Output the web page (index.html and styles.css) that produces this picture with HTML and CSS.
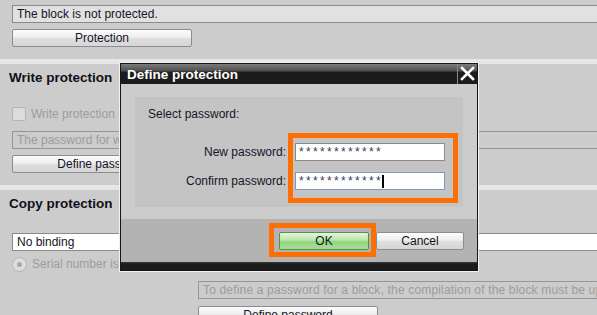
FILE: index.html
```html
<!DOCTYPE html>
<html>
<head>
<meta charset="utf-8">
<link rel="stylesheet" href="styles.css">
</head>
<body>
<div class="page">
  <div class="sec top">
    <div class="field info">The block is not protected.</div>
    <div class="btn wide gap6">Protection</div>
  </div>
  <div class="band b1"></div>
  <div class="sec">
    <h2 class="head">Write protection</h2>
    <div class="opt check-row dis"><span class="check"></span><span>Write protection</span></div>
    <div class="field dis f2">The password for write protection</div>
    <div class="btn wide gap6">Define password</div>
  </div>
  <div class="band b2"></div>
  <div class="sec">
    <h2 class="head">Copy protection</h2>
    <div class="field white f3">No binding</div>
    <div class="opt radio-row dis"><span class="radio"><span class="dot"></span></span><span>Serial number is known</span></div>
    <div class="indent">
      <div class="field dis f4 wide-text">To define a password for a block, the compilation of the block must be up to date.</div>
      <div class="btn wide gap7">Define password</div>
    </div>
  </div>

  <div class="dialog">
    <div class="titlebar">
      <span class="title">Define protection</span>
      <span class="close">
        <svg width="19" height="20" viewBox="0 0 19 20"><path d="M4 4 L15 15 M15 4 L4 15" stroke="#fff" stroke-width="2.6" stroke-linecap="square" fill="none"/></svg>
      </span>
    </div>
    <div class="dbody">
      <div class="panel">
        <div class="select">Select password:</div>
        <div class="pwrow">
          <div class="labels">
            <div class="lbl">New password:</div>
            <div class="lbl">Confirm password:</div>
          </div>
          <div class="hl pwbox">
            <div class="pw">************</div>
            <div class="pw focus">************<span class="caret"></span></div>
          </div>
        </div>
      </div>
    </div>
    <div class="dfoot">
      <div class="hl okbox"><div class="btn ok">OK</div></div>
      <div class="btn cancel">Cancel</div>
    </div>
    <div class="dbottom"></div>
  </div>
</div>
</body>
</html>
```

FILE: styles.css
```css
html, body {
  margin: 0;
  padding: 0;
}
body {
  width: 597px;
  height: 315px;
  overflow: hidden;
  background: #cccccc;
  font-family: "Liberation Sans", Arial, sans-serif;
  font-size: 12px;
  color: #141428;
}
.page {
  position: relative;
  width: 597px;
  height: 315px;
  overflow: hidden;
}
.top {
  padding-top: 5px;
}
.field {
  box-sizing: border-box;
  height: 18px;
  line-height: 16px;
  border: 1px solid #8a8a8a;
  margin: 0 -6px 0 12px;
  padding-left: 4px;
  white-space: nowrap;
  overflow: hidden;
}
.info {
  background: #e1e1e1;
}
.white {
  background: #ffffff;
}
.field.dis {
  background: #cccccc;
  color: #9c9c9c;
  border-color: #959595;
}
.wide-text {
  letter-spacing: 0.17px;
}
.btn {
  box-sizing: border-box;
  height: 18px;
  line-height: 16px;
  text-align: center;
  border: 1px solid #8c8c8c;
  border-radius: 2px;
  background: linear-gradient(#fcfcfc, #eeeeee 45%, #dedede 55%, #d6d6d6);
  color: #141428;
}
.wide {
  width: 180px;
  margin-left: 12px;
}
.gap6 { margin-top: 6px; }
.gap7 { margin-top: 7px; }
.band {
  height: 5px;
  background: #e6e6e6;
}
.b1 { margin-top: 12px; }
.b2 { margin-top: 12px; }
.head {
  margin: 6px 0 0 9px;
  font-size: 13.5px;
  line-height: 16px;
  font-weight: bold;
  color: #101018;
}
.opt {
  display: flex;
  align-items: center;
  height: 16px;
  margin-left: 12px;
  white-space: nowrap;
}
.opt.dis {
  color: #9c9c9c;
}
.check-row {
  margin-top: 20px;
}
.check {
  box-sizing: border-box;
  width: 14px;
  height: 14px;
  border: 1px solid #b4b4b4;
  border-radius: 2px;
  background: #dcdcdc;
  margin-right: 5px;
}
.f2 { margin-top: 9px; }
.f3 { margin-top: 21px; }
.radio-row {
  margin-top: 5px;
}
.radio {
  box-sizing: border-box;
  width: 15px;
  height: 15px;
  border: 1px solid #b4b4b4;
  border-radius: 50%;
  background: #dedede;
  margin-right: 5px;
  display: flex;
  align-items: center;
  justify-content: center;
}
.dot {
  width: 5px;
  height: 5px;
  border-radius: 50%;
  background: #a8a8a8;
}
.indent .field {
  margin-left: 198px;
}
.indent .wide {
  margin-left: 198px;
}
.f4 { margin-top: 9px; }

/* dialog overlay */
.dialog {
  position: absolute;
  left: 120px;
  top: 63px;
  width: 358px;
  height: 208px;
  box-sizing: border-box;
  border: 1px solid #161616;
  box-shadow: 0 0 0 1px #f2f2f2;
  display: flex;
  flex-direction: column;
  background: #cccccc;
}
.titlebar {
  height: 20px;
  display: flex;
  align-items: center;
  justify-content: space-between;
  background: linear-gradient(#7c7c7c 0, #4e4e4e 7px, #1c1c1c 8px, #1c1c1c);
}
.title {
  color: #ffffff;
  font-weight: bold;
  font-size: 13.5px;
  padding-left: 6px;
  padding-top: 1px;
}
.close {
  width: 19px;
  height: 20px;
  border-left: 1px solid #8a8a8a;
  display: block;
}
.close svg {
  display: block;
}
.dbody {
  height: 135px;
  box-sizing: border-box;
  padding: 13px 14px 0 14px;
}
.panel {
  height: 110px;
  background: #c4c4c4;
  box-sizing: border-box;
  padding-top: 10px;
}
.select {
  padding-left: 13px;
  line-height: 14px;
}
.pwrow {
  margin-top: 12px;
  display: flex;
  justify-content: flex-end;
  padding-right: 5px;
}
.labels {
  display: flex;
  flex-direction: column;
  gap: 11px;
  padding-top: 10px;
  margin-right: 2px;
  text-align: right;
}
.lbl {
  line-height: 18px;
  height: 18px;
}
.hl {
  border: 5px solid #ff6e00;
}
.pwbox {
  padding: 5px 8px 8px 2px;
  display: flex;
  flex-direction: column;
  gap: 11px;
}
.pw {
  box-sizing: border-box;
  width: 150px;
  height: 18px;
  line-height: 18px;
  border: 1px solid #8a8a8a;
  background: #ffffff;
  padding-left: 3px;
  letter-spacing: 2.33px;
  color: #3a3a5a;
  display: flex;
  align-items: center;
  white-space: nowrap;
}
.pw.focus {
  border-color: #8397c0;
}
.caret {
  display: inline-block;
  width: 0;
  height: 13px;
  border-left: 2px solid #000;
  margin-left: -1px;
}
.dfoot {
  height: 43px;
  box-sizing: border-box;
  background: #b3b3b3;
  display: flex;
  justify-content: flex-end;
  align-items: flex-start;
  padding: 4px 13px 0 0;
}
.okbox {
  padding: 4px 2px 2px 5px;
}
.ok {
  width: 90px;
  border-color: #549245;
  background: linear-gradient(#e6f6df, #b8e6a8 45%, #92d67e 55%, #a8de96);
}
.cancel {
  width: 88px;
  margin-top: 9px;
}
.dbottom {
  flex: 1;
  background: linear-gradient(#3a3a3a, #1c1c1c 2px);
}
```
